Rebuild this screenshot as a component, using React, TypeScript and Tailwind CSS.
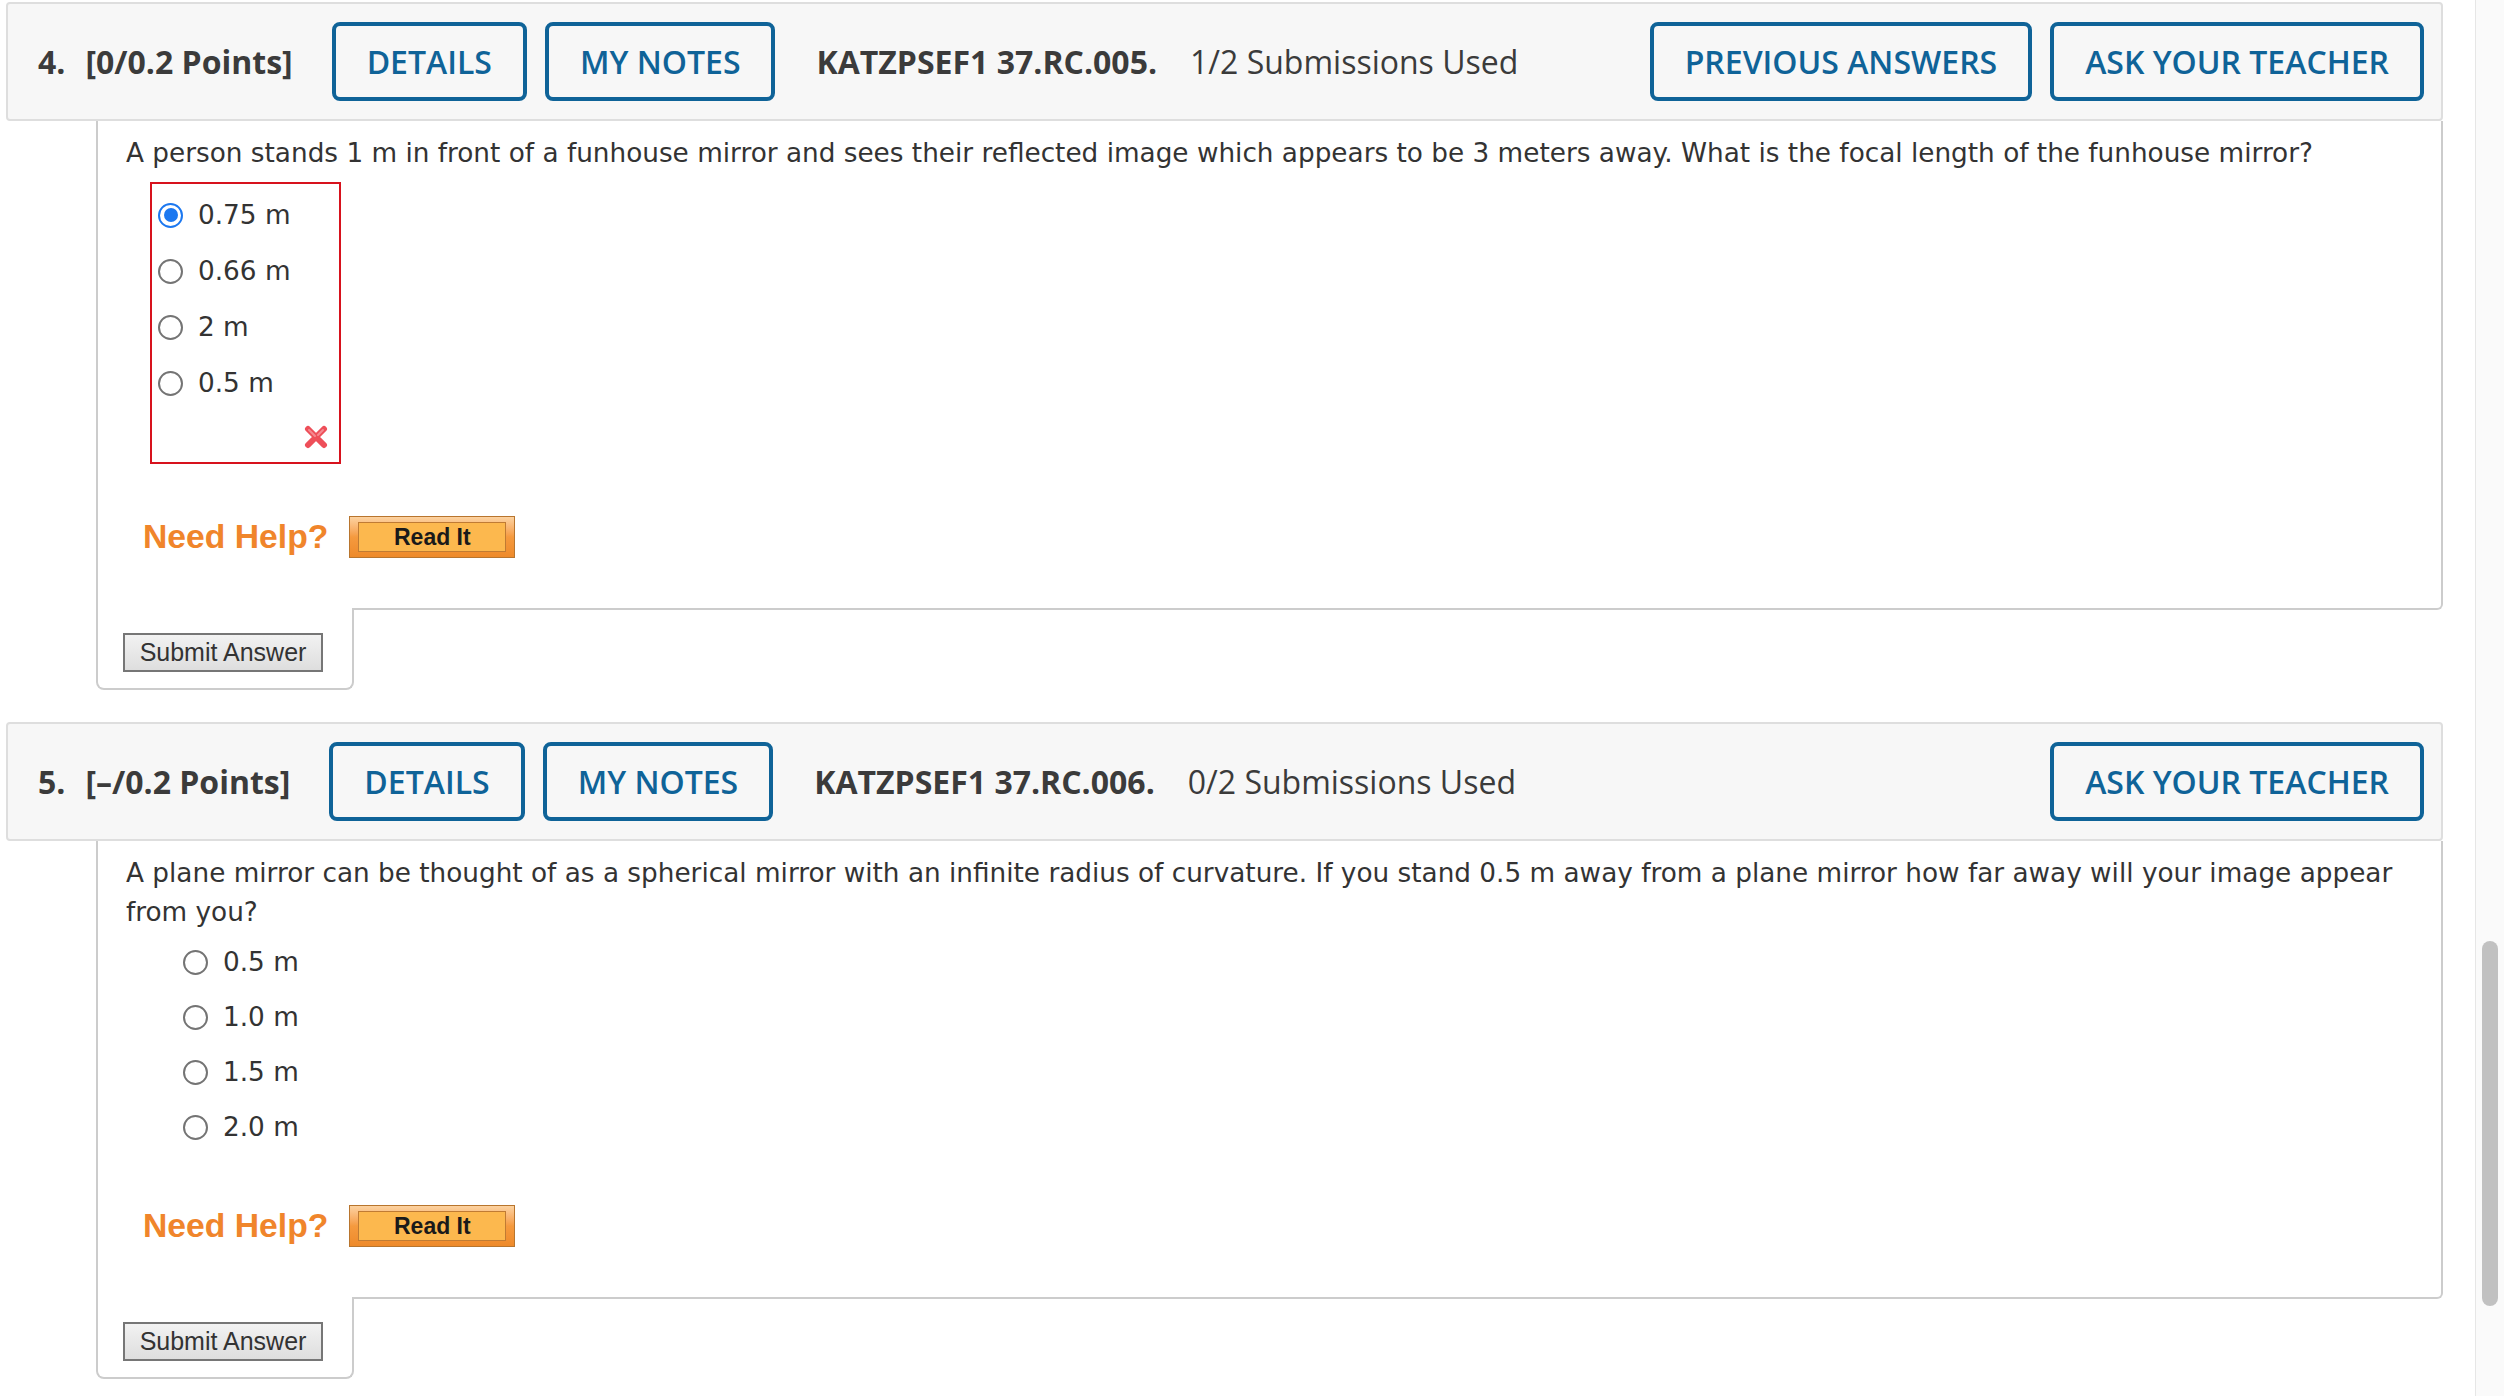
import type { ReactNode } from "react";

type Question = {
  num: number;
  points: string;
  code: string;
  used: string;
  prompt: string;
  options: string[];
  selected: number | null;
  graded: boolean;
  showPrevious: boolean;
};

const QUESTIONS: Question[] = [
  {
    num: 4,
    points: "[0/0.2 Points]",
    code: "KATZPSEF1 37.RC.005.",
    used: "1/2 Submissions Used",
    prompt:
      "A person stands 1 m in front of a funhouse mirror and sees their reflected image which appears to be 3 meters away. What is the focal length of the funhouse mirror?",
    options: ["0.75 m", "0.66 m", "2 m", "0.5 m"],
    selected: 0,
    graded: true,
    showPrevious: true,
  },
  {
    num: 5,
    points: "[\u2013/0.2 Points]",
    code: "KATZPSEF1 37.RC.006.",
    used: "0/2 Submissions Used",
    prompt:
      "A plane mirror can be thought of as a spherical mirror with an infinite radius of curvature. If you stand 0.5 m away from a plane mirror how far away will your image appear from you?",
    options: ["0.5 m", "1.0 m", "1.5 m", "2.0 m"],
    selected: null,
    graded: false,
    showPrevious: false,
  },
];

function OutlineButton({ children }: { children: ReactNode }) {
  return (
    <button className="flex h-[79px] items-center rounded-[8px] border-4 border-[#0f6398] px-[31px] text-[32px] font-semibold text-[#0f6398]">
      {children}
    </button>
  );
}

function QuestionHeader({ q }: { q: Question }) {
  return (
    <div className="flex h-[119px] items-center rounded-[4px] border-2 border-[#dedede] bg-[#f7f7f7] pl-[30px] pr-[17px] font-['Open_Sans',sans-serif] text-[32px] text-[#3b3b3b]">
      <span className="font-bold">{q.num}.</span>
      <span className="ml-[20px] font-bold">{q.points}</span>
      <div className="ml-[39px] flex gap-[18px]">
        <OutlineButton>DETAILS</OutlineButton>
        <OutlineButton>MY NOTES</OutlineButton>
      </div>
      <span className="ml-[41px] font-bold">{q.code}</span>
      <span className="ml-[33px]">{q.used}</span>
      <div className="ml-auto flex gap-[18px]">
        {q.showPrevious && <OutlineButton>PREVIOUS ANSWERS</OutlineButton>}
        <OutlineButton>ASK YOUR TEACHER</OutlineButton>
      </div>
    </div>
  );
}

function Radio({ checked }: { checked: boolean }) {
  if (checked) {
    return (
      <span className="flex h-[25px] w-[25px] shrink-0 items-center justify-center rounded-full border-[2.5px] border-[#1c78f0] bg-white">
        <span className="h-[14px] w-[14px] rounded-full bg-[#1c78f0]" />
      </span>
    );
  }
  return <span className="h-[25px] w-[25px] shrink-0 rounded-full border-2 border-[#747474] bg-white" />;
}

function WrongMark() {
  return (
    <svg width="26" height="24" viewBox="0 0 26 24">
      <path d="M5 4 L21 20 M21 4 L5 20" stroke="#ee4f59" strokeWidth="6" strokeLinecap="round" />
      <path d="M6 5 L12 11 M20 5 L15 10" stroke="#f58a91" strokeWidth="2" strokeLinecap="round" />
    </svg>
  );
}

function ReadIt() {
  return (
    <div className="h-[42px] w-[166px] border border-[#b8752e] bg-linear-to-b from-[#fcd2a0] via-[#f59a3e] to-[#ee8a2a] px-[8px] py-[5px]">
      <div className="flex h-full items-center justify-center border border-[#c07b33] bg-[#fcb84e] font-['Liberation_Sans',Arial,sans-serif] text-[23px] font-bold text-[#1a1a1a]">
        Read It
      </div>
    </div>
  );
}

function NeedHelp({ className }: { className: string }) {
  return (
    <div className={`ml-[17px] flex items-center gap-[21px] ${className}`}>
      <span className="font-['Liberation_Sans',Arial,sans-serif] text-[33.7px] font-bold leading-none text-[#f0852b]">
        Need Help?
      </span>
      <ReadIt />
    </div>
  );
}

function SubmitTab() {
  return (
    <div className="relative -mt-[2px] ml-[90px] w-[258px] rounded-b-[8px] border-x-2 border-b-2 border-[#cccccc] bg-white pb-[16px] pl-[25px] pt-[25px]">
      <button className="h-[39px] w-[200px] border-2 border-[#767676] bg-linear-to-b from-[#f2f2f2] to-[#dedede] font-['Liberation_Sans',Arial,sans-serif] text-[25px] leading-none text-[#333333]">
        Submit Answer
      </button>
    </div>
  );
}

function QuestionBlock({ q }: { q: Question }) {
  const rows = q.options.map((opt, i) => (
    <div key={opt} className={`flex items-center gap-[15px] ${q.graded ? "h-[56px]" : "h-[55px]"}`}>
      <Radio checked={q.selected === i} />
      <span>{opt}</span>
    </div>
  ));

  return (
    <div>
      <QuestionHeader q={q} />
      <div className="ml-[90px] rounded-br-[6px] border-x-2 border-b-2 border-[#cccccc] pb-[50px] pl-[28px] pr-[30px] pt-[13px] font-['DejaVu_Sans',Verdana,sans-serif] text-[26.3px] leading-[39px] text-[#333333]">
        <p>{q.prompt}</p>
        {q.graded ? (
          <div className="ml-[24px] mt-[9px] w-[191px] border-2 border-[#d7121d] pb-[13px] pl-[6px] pr-[10px] pt-[3px]">
            {rows}
            <div className="mt-[14px] flex h-[24px] justify-end">
              <WrongMark />
            </div>
          </div>
        ) : (
          <div className="ml-[57px] mt-[3px]">{rows}</div>
        )}
        <NeedHelp className={q.graded ? "mt-[52px]" : "mt-[50px]"} />
      </div>
      <SubmitTab />
    </div>
  );
}

export default function App() {
  return (
    <div className="flex h-[1396px] overflow-hidden bg-white">
      <main className="flex-1 pl-[6px] pr-[32px] pt-[2px]">
        <div className="flex flex-col gap-[32px]">
          {QUESTIONS.map((q) => (
            <QuestionBlock key={q.num} q={q} />
          ))}
        </div>
      </main>
      {/* page scrollbar */}
      <div className="flex w-[29px] shrink-0 justify-center border-l border-[#e6e6e6] bg-[#fafafa]">
        <div className="mt-[941px] h-[365px] w-[16px] rounded-full bg-[#c1c1c1]" />
      </div>
    </div>
  );
}
